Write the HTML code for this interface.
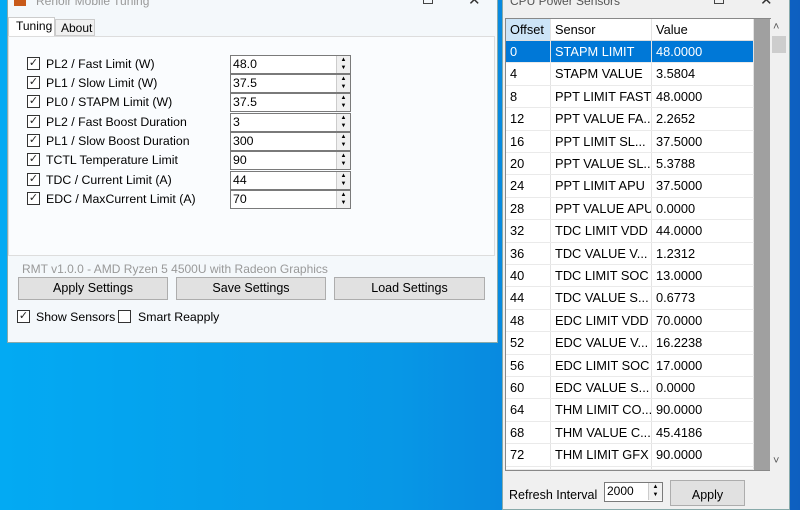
<!DOCTYPE html><html><head><style>
*{margin:0;padding:0;box-sizing:border-box}
body{width:800px;height:500px;overflow:hidden;position:relative;font-family:"Liberation Sans",sans-serif;font-size:12px;color:#000;background:linear-gradient(90deg,#03aaf3 0%,#0797e6 50%,#0a78d6 80%,#0d5fc0 100%)}
.a{position:absolute}
.win{background:#f3f7fa;border:1px solid #8aa;}
.cb{position:absolute;width:13px;height:13px;border:1px solid #333;background:#fff;font-size:11px;line-height:11px;text-align:center;color:#222}
.lbl{position:absolute;font-size:12.3px}
.inp{position:absolute;left:230px;width:121px;height:19px;border:1px solid #7a7a7a;background:#fff;padding-left:2px;line-height:16px;font-size:12.3px}
.sp{position:absolute;right:0;top:0;width:14px;height:17px;background:#f0f0f0;border-left:1px solid #ccc;font-size:6px;line-height:8px;text-align:center}
.btn{position:absolute;height:23px;background:#e1e1e1;border:1px solid #adadad;text-align:center;line-height:21px;font-size:12.5px}
.row{position:absolute;left:506px;width:248px;height:22.4px;background:#fff;border-bottom:1px solid #eaeaea;font-size:12.8px;line-height:22px}
.row span{position:absolute;top:0;height:100%;border-right:1px solid #e3e3e3;padding-left:4px;white-space:nowrap;overflow:hidden}
.c1{left:0;width:45px}.c2{left:45px;width:101px}.c3{left:146px;width:102px}
</style></head><body>
<div class="a win" style="left:7px;top:-10px;width:491px;height:353px;background:#f4f8fb"></div>
<div class="a" style="left:14px;top:-8px;width:12px;height:14px;background:#c85a1a"></div>
<div class="a" style="left:36px;top:-6px;color:#999;font-size:12px">Renoir Mobile Tuning</div>
<div class="a" style="left:423px;top:-6px;width:10px;height:10px;border:1px solid #444"></div>
<div class="a" style="left:468px;top:-9px;font-size:15px;color:#333">✕</div>
<div class="a" style="left:8px;top:17px;width:47px;height:20px;background:#fff;border:1px solid #ccc;border-bottom:none;padding:1px 0 0 7px">Tuning</div>
<div class="a" style="left:55px;top:19px;width:40px;height:17px;background:#f0f0f0;border:1px solid #ccc;padding:1px 0 0 5px">About</div>
<div class="a" style="left:8px;top:36px;width:487px;height:220px;background:#fafcfe;border:1px solid #ddd"></div>
<div class="cb" style="left:27px;top:57px">✓</div><div class="lbl" style="left:46px;top:57px">PL2 / Fast Limit (W)</div><div class="inp" style="top:55px">48.0<div class="sp">▲<br>▼</div></div>
<div class="cb" style="left:27px;top:76px">✓</div><div class="lbl" style="left:46px;top:76px">PL1 / Slow Limit (W)</div><div class="inp" style="top:74px">37.5<div class="sp">▲<br>▼</div></div>
<div class="cb" style="left:27px;top:95px">✓</div><div class="lbl" style="left:46px;top:95px">PL0 / STAPM Limit (W)</div><div class="inp" style="top:93px">37.5<div class="sp">▲<br>▼</div></div>
<div class="cb" style="left:27px;top:115px">✓</div><div class="lbl" style="left:46px;top:115px">PL2 / Fast Boost Duration</div><div class="inp" style="top:113px">3<div class="sp">▲<br>▼</div></div>
<div class="cb" style="left:27px;top:134px">✓</div><div class="lbl" style="left:46px;top:134px">PL1 / Slow Boost Duration</div><div class="inp" style="top:132px">300<div class="sp">▲<br>▼</div></div>
<div class="cb" style="left:27px;top:153px">✓</div><div class="lbl" style="left:46px;top:153px">TCTL Temperature Limit</div><div class="inp" style="top:151px">90<div class="sp">▲<br>▼</div></div>
<div class="cb" style="left:27px;top:173px">✓</div><div class="lbl" style="left:46px;top:173px">TDC / Current Limit (A)</div><div class="inp" style="top:171px">44<div class="sp">▲<br>▼</div></div>
<div class="cb" style="left:27px;top:192px">✓</div><div class="lbl" style="left:46px;top:192px">EDC / MaxCurrent Limit (A)</div><div class="inp" style="top:190px">70<div class="sp">▲<br>▼</div></div>
<div class="a" style="left:22px;top:262px;color:#999;font-size:12px">RMT v1.0.0 - AMD Ryzen 5 4500U with Radeon Graphics</div>
<div class="btn" style="left:18px;top:277px;width:150px">Apply Settings</div>
<div class="btn" style="left:176px;top:277px;width:150px">Save Settings</div>
<div class="btn" style="left:334px;top:277px;width:151px">Load Settings</div>
<div class="cb" style="left:17px;top:310px">✓</div><div class="lbl" style="left:36px;top:310px">Show Sensors</div>
<div class="cb" style="left:118px;top:310px"></div><div class="lbl" style="left:138px;top:310px">Smart Reapply</div>
<div class="a win" style="left:502px;top:-10px;width:288px;height:520px;background:#f0f0f0"></div>
<div class="a" style="left:510px;top:-6px;color:#555">CPU Power Sensors</div>
<div class="a" style="left:714px;top:-6px;width:10px;height:10px;border:1px solid #444"></div>
<div class="a" style="left:760px;top:-9px;font-size:15px;color:#333">✕</div>
<div class="a" style="left:505px;top:18px;width:266px;height:453px;background:#a0a0a0;border:1px solid #888"></div>
<div class="row" style="top:19px;height:22px;background:#fff;border-bottom:1px solid #ddd"><span class="c1" style="background:#cce4f7">Offset</span><span class="c2">Sensor</span><span class="c3">Value</span></div>
<div class="row" style="top:41px;background:#0078d7;color:#fff"><span class="c1">0</span><span class="c2">STAPM LIMIT</span><span class="c3">48.0000</span></div>
<div class="row" style="top:63.4px"><span class="c1">4</span><span class="c2">STAPM VALUE</span><span class="c3">3.5804</span></div>
<div class="row" style="top:85.8px"><span class="c1">8</span><span class="c2">PPT LIMIT FAST</span><span class="c3">48.0000</span></div>
<div class="row" style="top:108.2px"><span class="c1">12</span><span class="c2">PPT VALUE FA...</span><span class="c3">2.2652</span></div>
<div class="row" style="top:130.6px"><span class="c1">16</span><span class="c2">PPT LIMIT SL...</span><span class="c3">37.5000</span></div>
<div class="row" style="top:153px"><span class="c1">20</span><span class="c2">PPT VALUE SL...</span><span class="c3">5.3788</span></div>
<div class="row" style="top:175.4px"><span class="c1">24</span><span class="c2">PPT LIMIT APU</span><span class="c3">37.5000</span></div>
<div class="row" style="top:197.8px"><span class="c1">28</span><span class="c2">PPT VALUE APU</span><span class="c3">0.0000</span></div>
<div class="row" style="top:220.2px"><span class="c1">32</span><span class="c2">TDC LIMIT VDD</span><span class="c3">44.0000</span></div>
<div class="row" style="top:242.6px"><span class="c1">36</span><span class="c2">TDC VALUE V...</span><span class="c3">1.2312</span></div>
<div class="row" style="top:265px"><span class="c1">40</span><span class="c2">TDC LIMIT SOC</span><span class="c3">13.0000</span></div>
<div class="row" style="top:287.4px"><span class="c1">44</span><span class="c2">TDC VALUE S...</span><span class="c3">0.6773</span></div>
<div class="row" style="top:309.8px"><span class="c1">48</span><span class="c2">EDC LIMIT VDD</span><span class="c3">70.0000</span></div>
<div class="row" style="top:332.2px"><span class="c1">52</span><span class="c2">EDC VALUE V...</span><span class="c3">16.2238</span></div>
<div class="row" style="top:354.6px"><span class="c1">56</span><span class="c2">EDC LIMIT SOC</span><span class="c3">17.0000</span></div>
<div class="row" style="top:377px"><span class="c1">60</span><span class="c2">EDC VALUE S...</span><span class="c3">0.0000</span></div>
<div class="row" style="top:399.4px"><span class="c1">64</span><span class="c2">THM LIMIT CO...</span><span class="c3">90.0000</span></div>
<div class="row" style="top:421.8px"><span class="c1">68</span><span class="c2">THM VALUE C...</span><span class="c3">45.4186</span></div>
<div class="row" style="top:444.2px"><span class="c1">72</span><span class="c2">THM LIMIT GFX</span><span class="c3">90.0000</span></div>
<div class="row" style="top:466.6px;height:3.4px"><span class="c1"></span><span class="c2"></span><span class="c3"></span></div>
<div class="a" style="left:770px;top:19px;width:18px;height:452px;background:#f0f0f0"></div>
<div class="a" style="left:773px;top:21px;font-size:11px;color:#555">˄</div>
<div class="a" style="left:772px;top:36px;width:14px;height:17px;background:#cdcdcd"></div>
<div class="a" style="left:773px;top:455px;font-size:11px;color:#555">˅</div>
<div class="a" style="left:509px;top:488px;font-size:12.5px">Refresh Interval</div>
<div class="a" style="left:604px;top:482px;width:59px;height:20px;border:1px solid #7a7a7a;background:#fff;padding-left:2px;line-height:16px">2000<div class="sp">▲<br>▼</div></div>
<div class="btn" style="left:670px;top:480px;width:75px;height:26px;padding-top:4px">Apply</div>
</body></html>
